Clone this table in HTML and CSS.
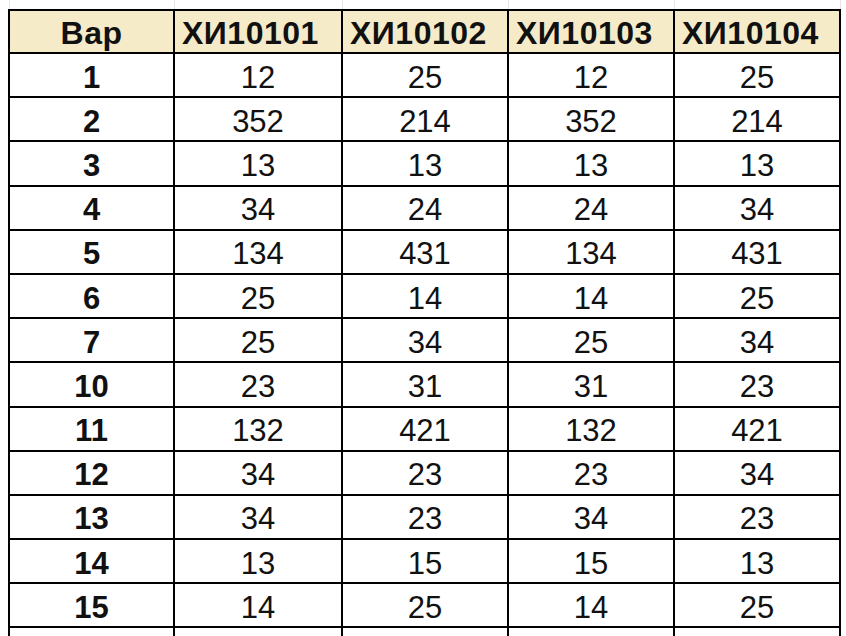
FILE: index.html
```html
<!DOCTYPE html>
<html lang="ru">
<head>
<meta charset="utf-8">
<title>Таблица вариантов</title>
<link rel="stylesheet" href="styles.css">
</head>
<body>
<table class="grid">
  <colgroup>
    <col class="c1"><col class="c2"><col class="c3"><col class="c4"><col class="c5">
  </colgroup>
  <tr class="pad"><td></td><td></td><td></td><td></td><td></td></tr>
  <tr class="head"><th>Вар</th><th class="code">ХИ10101</th><th class="code">ХИ10102</th><th class="code">ХИ10103</th><th class="code">ХИ10104</th></tr>
  <tr><th>1</th><td>12</td><td>25</td><td>12</td><td>25</td></tr>
  <tr><th>2</th><td>352</td><td>214</td><td>352</td><td>214</td></tr>
  <tr><th>3</th><td>13</td><td>13</td><td>13</td><td>13</td></tr>
  <tr><th>4</th><td>34</td><td>24</td><td>24</td><td>34</td></tr>
  <tr><th>5</th><td>134</td><td>431</td><td>134</td><td>431</td></tr>
  <tr><th>6</th><td>25</td><td>14</td><td>14</td><td>25</td></tr>
  <tr><th>7</th><td>25</td><td>34</td><td>25</td><td>34</td></tr>
  <tr><th>10</th><td>23</td><td>31</td><td>31</td><td>23</td></tr>
  <tr><th>11</th><td>132</td><td>421</td><td>132</td><td>421</td></tr>
  <tr><th>12</th><td>34</td><td>23</td><td>23</td><td>34</td></tr>
  <tr><th>13</th><td>34</td><td>23</td><td>34</td><td>23</td></tr>
  <tr><th>14</th><td>13</td><td>15</td><td>15</td><td>13</td></tr>
  <tr><th>15</th><td>14</td><td>25</td><td>14</td><td>25</td></tr>
  <tr class="tail"><th></th><td></td><td></td><td></td><td></td></tr>
</table>
</body>
</html>
```
FILE: styles.css
```css
html, body {
  margin: 0;
  padding: 0;
  background: #ffffff;
  overflow: hidden;
}

.grid {
  margin-left: 8px;
  border-collapse: collapse;
  table-layout: fixed;
  width: 831px;
  font-family: "Liberation Sans", Arial, sans-serif;
  color: #111111;
}

.c1 { width: 165px; }
.c2 { width: 168px; }
.c3 { width: 166px; }
.c4 { width: 166px; }
.c5 { width: 166px; }

.grid th,
.grid td {
  border: 2px solid #000000;
  padding: 4px 0 0 0;
  text-align: center;
  vertical-align: middle;
  line-height: 1;
}

.grid tr {
  height: 44.2px;
}

.grid td {
  font-size: 31px;
  font-weight: 400;
}

.grid th {
  font-size: 31px;
  font-weight: 700;
}

.grid .pad {
  height: 10px;
}

.grid .pad td {
  border-top: none;
  border-left: 1px solid #e6e6e6;
  border-right: 1px solid #e6e6e6;
  border-bottom: 2px solid #000000;
  padding: 0;
}

.grid .head {
  height: 43px;
}

.grid .head th {
  background: #f6ebc9;
  font-size: 32px;
  letter-spacing: 0.5px;
  padding-top: 3px;
}

.grid .head th.code {
  text-align: left;
  padding-left: 7px;
}

.grid .tail {
  height: 20px;
}
```
